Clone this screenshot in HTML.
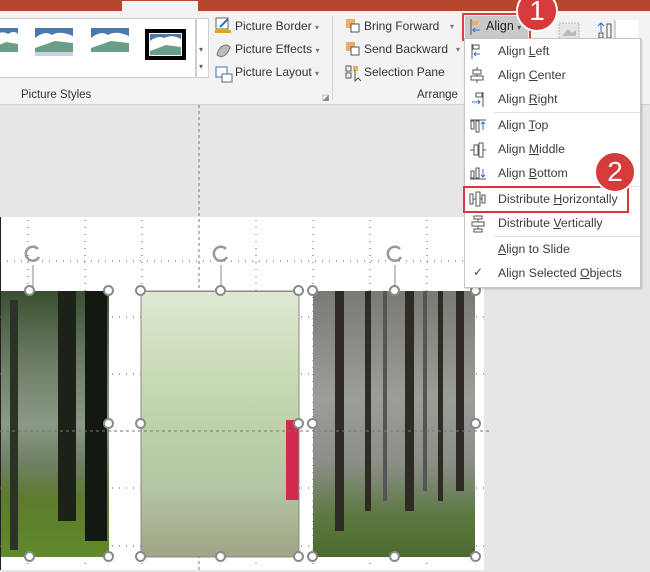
<!DOCTYPE html>
<html><head><style>
*{margin:0;padding:0;box-sizing:border-box}
body{width:650px;height:572px;overflow:hidden;position:relative;background:#e6e6e6;font-family:"Segoe UI","Liberation Sans",sans-serif;font-size:12px;color:#262626}
.abs{position:absolute}
.t{position:absolute;white-space:nowrap;font-size:12px;color:#333}
.mi{position:absolute;left:498px;font-size:12.3px;color:#3a3a3a;white-space:nowrap}
.h{position:absolute;width:11px;height:11px;border:2px solid #8a8a8a;border-radius:50%;background:#fff}
</style></head><body>
<div class="abs" style="left:0;top:0;width:650px;height:11px;background:#b7472a"></div>
<div class="abs" style="left:122px;top:1px;width:76px;height:10px;background:#f3f3f3"></div>
<div class="abs" style="left:0;top:11px;width:650px;height:94px;background:#f3f3f3;border-bottom:1px solid #d4d4d4"></div>
<div class="abs" style="left:0;top:18px;width:196px;height:60px;background:#fff;border:1px solid #cfcfcf;border-left:none"></div>
<div class="abs" style="left:196px;top:18px;width:13px;height:60px;background:#fff;border:1px solid #cfcfcf"></div>
<div class="abs" style="left:199px;top:45px;font-size:8px;color:#666">▾</div>
<div class="abs" style="left:199px;top:62px;font-size:8px;color:#666">▾</div>
<svg class="abs" style="left:0;top:28px" width="190" height="38">
<g><rect x="-8" y="0" width="26" height="24" fill="#4a78b0"/><path d="M-8 8 Q2 2 8 6 Q14 2 18 6 V24 H-8Z" fill="#fff"/><path d="M-8 20 L6 14 L18 16 V24 H-8Z" fill="#6b9e86"/></g>
<g><rect x="35" y="0" width="38" height="24" fill="#4a78b0"/><path d="M35 10 Q45 2 52 7 Q60 2 73 8 V24 H35Z" fill="#fff"/><path d="M35 20 L55 13 L73 15 V24 H35Z" fill="#6b9e86"/><rect x="35" y="24" width="38" height="4" fill="#c8d4e4"/></g>
<g><rect x="91" y="0" width="38" height="24" fill="#4a78b0"/><path d="M91 10 Q101 2 108 7 Q116 2 129 8 V24 H91Z" fill="#fff"/><path d="M91 20 L111 13 L129 15 V24 H91Z" fill="#6b9e86"/></g>
<rect x="145" y="1" width="41" height="31" fill="#000"/><rect x="149" y="5" width="33" height="23" fill="#fff"/>
<g><rect x="150" y="6" width="31" height="21" fill="#4a78b0"/><path d="M150 13 Q158 7 164 10 Q172 6 181 11 V27 H150Z" fill="#fff"/><path d="M150 23 L166 17 L181 19 V27 H150Z" fill="#6b9e86"/></g>
</svg>
<div class="t" style="left:21px;top:89px;font-size:11.5px">Picture Styles</div>
<div class="abs" style="left:322px;top:93px;font-size:8px;color:#888">◪</div>
<svg class="abs" style="left:215px;top:17px" width="18" height="68">
<rect x="1" y="1" width="12" height="11" fill="#fff" stroke="#666"/><path d="M5 10 L13 2" stroke="#3a6fc2" stroke-width="2"/><rect x="0" y="13" width="16" height="3" fill="#e0a020"/>
<path d="M2 38 Q4 28 12 28 L15 30 Q13 38 6 40Z" fill="#bbb" stroke="#777"/>
<rect x="1" y="50" width="11" height="10" fill="#fff" stroke="#3a6fc2"/><rect x="7" y="57" width="10" height="8" fill="#fff" stroke="#666"/>
</svg>
<div class="t" style="left:235px;top:19px">Picture Border <span style="font-size:8px;color:#777">▾</span></div>
<div class="t" style="left:235px;top:42px">Picture Effects <span style="font-size:8px;color:#777">▾</span></div>
<div class="t" style="left:235px;top:65px">Picture Layout <span style="font-size:8px;color:#777">▾</span></div>
<div class="abs" style="left:332px;top:16px;width:1px;height:84px;background:#d4d4d4"></div>
<svg class="abs" style="left:345px;top:17px" width="18" height="68">
<rect x="1" y="2" width="9" height="9" fill="#e8b060"/><rect x="6" y="7" width="8" height="8" fill="#fff" stroke="#555"/>
<rect x="1" y="25" width="9" height="9" fill="#e8b060"/><rect x="6" y="30" width="8" height="8" fill="#fff" stroke="#555"/>
<rect x="1" y="49" width="5" height="5" fill="none" stroke="#555"/><rect x="1" y="56" width="5" height="5" fill="none" stroke="#555"/><rect x="8" y="49" width="5" height="5" fill="#e8b060"/><path d="M10 53 L10 64 L13 61 L16 64" fill="none" stroke="#555"/>
</svg>
<div class="t" style="left:364px;top:19px">Bring Forward</div><div class="abs" style="left:450px;top:22px;font-size:8px;color:#777">▾</div>
<div class="t" style="left:364px;top:42px">Send Backward</div><div class="abs" style="left:456px;top:45px;font-size:8px;color:#777">▾</div>
<div class="t" style="left:364px;top:65px">Selection Pane</div>
<div class="t" style="left:417px;top:89px;font-size:11.5px">Arrange</div>
<div class="abs" style="left:462px;top:13px;width:69px;height:28px;border:2px solid #e03c3c;background:#f3f3f3"></div>
<div class="abs" style="left:465px;top:16px;width:63px;height:22px;background:#c9c9c9"></div>
<svg class="abs" style="left:470px;top:19px" width="14" height="16"><path d="M1 0V16" stroke="#555"/><rect x="2" y="2" width="6" height="4" fill="#e8b060"/><path d="M10 11H3M5 9L3 11L5 13" stroke="#3a6fc2" fill="none"/></svg>
<div class="t" style="left:486px;top:19px;color:#222;font-size:12.5px">Align <span style="font-size:8px;color:#555">▾</span></div>
<svg class="abs" style="left:558px;top:20px" width="80" height="24"><rect x="1" y="3" width="20" height="16" fill="#e5e5e5" stroke="#bbb" stroke-dasharray="2 1"/><path d="M4 16 L10 9 L14 13 L18 10 V16Z" fill="#bbb"/><path d="M43 3V12M40 6L43 3L46 6" stroke="#3a6fc2" fill="none"/><rect x="41" y="13" width="4" height="5" fill="none" stroke="#555"/><rect x="49" y="4" width="4" height="14" fill="none" stroke="#555"/><rect x="57" y="-2" width="30" height="22" fill="#fff" stroke="#aaa"/></svg>
<div class="abs" style="left:0;top:217px;width:484px;height:353px;background:#fff;border-left:1px solid #222"></div>
<svg class="abs" style="left:0;top:105px" width="650" height="467">
<g stroke="#555" stroke-width="1" stroke-dasharray="1 6">
<path d="M28 115V460M85 115V460M142 115V460M256 115V460M313 115V460M370 115V460M427 115V460"/>
<path d="M0 156H484M0 212H484M0 269H484M0 383H484M0 441H484"/>
</g>
<path d="M199 0V467" stroke="#777" stroke-dasharray="3 3"/>
</svg>
<div class="abs" style="left:1px;top:291px;width:108px;height:266px;background:linear-gradient(180deg,#39502f 0%,#6a7a62 25%,#8a9a86 50%,#6f7f62 65%,#5e7a2e 78%,#5f8a2a 100%)"></div>
<div class="abs" style="left:58px;top:291px;width:18px;height:230px;background:#1c2218"></div>
<div class="abs" style="left:85px;top:291px;width:22px;height:250px;background:#141813"></div>
<div class="abs" style="left:10px;top:300px;width:8px;height:250px;background:#2a3325"></div>
<div class="abs" style="left:141px;top:291px;width:158px;height:266px;background:linear-gradient(180deg,#dfe9d2 0%,#c6d9b2 35%,#b8cca5 60%,#b3c4a2 75%,#9fa585 100%);border-top:1px solid #888"></div>
<div class="abs" style="left:286px;top:420px;width:13px;height:80px;background:#d02a50"></div>
<div class="abs" style="left:313px;top:291px;width:162px;height:266px;background:linear-gradient(180deg,#7a7a74 0%,#9c9e98 40%,#8a8e86 65%,#5b7840 85%,#4c6a30 100%)"></div>
<svg class="abs" style="left:313px;top:291px" width="162" height="266"><g fill="#2e2a24"><rect x="22" y="0" width="9" height="240"/><rect x="52" y="0" width="6" height="220"/><rect x="92" y="0" width="9" height="220"/><rect x="125" y="0" width="5" height="210"/><rect x="143" y="0" width="8" height="200"/><rect x="110" y="0" width="4" height="200" fill="#555"/><rect x="70" y="0" width="4" height="210" fill="#555"/></g></svg>
<svg class="abs" style="left:0;top:230px" width="490" height="340">
<path d="M0 201H650" stroke="#777" stroke-dasharray="3 3"/>
<g stroke="#888" stroke-width="1" fill="none"><path d="M33 35V61M221 35V61M395 35V61"/><rect x="141" y="61" width="158" height="266"/></g>
<g fill="none" stroke="#999" stroke-width="2.5"><path d="M39 27 A7 7 0 1 1 38 19"/><path d="M227 27 A7 7 0 1 1 226 19"/><path d="M401 27 A7 7 0 1 1 400 19"/></g>
</svg>
<div class="h" style="left:24px;top:285px"></div><div class="h" style="left:103px;top:285px"></div>
<div class="h" style="left:135px;top:285px"></div><div class="h" style="left:215px;top:285px"></div><div class="h" style="left:293px;top:285px"></div>
<div class="h" style="left:307px;top:285px"></div><div class="h" style="left:389px;top:285px"></div><div class="h" style="left:470px;top:285px"></div>
<div class="h" style="left:103px;top:418px"></div><div class="h" style="left:135px;top:418px"></div><div class="h" style="left:293px;top:418px"></div><div class="h" style="left:307px;top:418px"></div><div class="h" style="left:470px;top:418px"></div>
<div class="h" style="left:24px;top:551px"></div><div class="h" style="left:103px;top:551px"></div>
<div class="h" style="left:135px;top:551px"></div><div class="h" style="left:215px;top:551px"></div><div class="h" style="left:293px;top:551px"></div>
<div class="h" style="left:307px;top:551px"></div><div class="h" style="left:389px;top:551px"></div><div class="h" style="left:470px;top:551px"></div>
<div class="abs" style="left:464px;top:38px;width:177px;height:250px;background:#fff;border:1px solid #c6c6c6;box-shadow:1px 1px 2px rgba(0,0,0,.2)"></div>
<div class="abs" style="left:494px;top:112px;width:146px;height:1px;background:#e1e1e1"></div>
<div class="abs" style="left:494px;top:186px;width:146px;height:1px;background:#e1e1e1"></div>
<div class="abs" style="left:494px;top:236px;width:146px;height:1px;background:#e1e1e1"></div>
<svg class="abs" style="left:468px;top:42px" width="22" height="200" stroke="#555" fill="none">
<path d="M4 2V17"/><rect x="5" y="3" width="6" height="4"/><path d="M12 12H6M8 10L6 12L8 14" stroke="#3a6fc2"/>
<path d="M9 25V41"/><rect x="5" y="28" width="8" height="4" fill="#fff"/><rect x="3" y="34" width="12" height="4" fill="#fff"/>
<path d="M15 50V65"/><rect x="8" y="51" width="6" height="4"/><path d="M4 60H12M10 58L12 60L10 62" stroke="#3a6fc2"/>
<path d="M2 78H18"/><rect x="3" y="79" width="3" height="8"/><rect x="8" y="79" width="3" height="11"/><path d="M15 88V80M13 82L15 80L17 82" stroke="#3a6fc2"/>
<path d="M2 108H18"/><rect x="6" y="103" width="4" height="10" fill="#fff"/><rect x="11" y="101" width="4" height="14" fill="#fff"/>
<path d="M2 137H18"/><rect x="3" y="129" width="3" height="7"/><rect x="8" y="126" width="3" height="10"/><path d="M15 127V135M13 133L15 135L17 133" stroke="#3a6fc2"/>
<rect x="2" y="152" width="3" height="10"/><rect x="8" y="150" width="4" height="14"/><rect x="14" y="153" width="3" height="8"/><path d="M8 157H5M12 157H14"/>
<rect x="6" y="174" width="8" height="3"/><rect x="4" y="180" width="12" height="4"/><rect x="6" y="187" width="8" height="3"/><path d="M10 177V180M10 184V187"/>
</svg>
<div class="mi" style="top:44px">Align <u>L</u>eft</div>
<div class="mi" style="top:68px">Align <u>C</u>enter</div>
<div class="mi" style="top:92px">Align <u>R</u>ight</div>
<div class="mi" style="top:118px">Align <u>T</u>op</div>
<div class="mi" style="top:142px">Align <u>M</u>iddle</div>
<div class="mi" style="top:166px">Align <u>B</u>ottom</div>
<div class="abs" style="left:463px;top:186px;width:166px;height:27px;border:2px solid #d9363e"></div>
<div class="mi" style="top:192px">Distribute <u>H</u>orizontally</div>
<div class="mi" style="top:216px">Distribute <u>V</u>ertically</div>
<div class="mi" style="top:242px"><u>A</u>lign to Slide</div>
<div class="mi" style="top:266px">Align Selected <u>O</u>bjects</div>
<div class="abs" style="left:473px;top:265px;font-size:12px;color:#444">✓</div>
<div class="abs" style="left:516px;top:-10px;width:42px;height:42px;border-radius:50%;background:#d63b3b;border:2px solid #fff;color:#fff;font-size:28px;text-align:center;line-height:37px;font-family:'Liberation Sans',sans-serif">1</div>
<div class="abs" style="left:594px;top:151px;width:42px;height:42px;border-radius:50%;background:#d63b3b;border:2px solid #fff;color:#fff;font-size:28px;text-align:center;line-height:37px;font-family:'Liberation Sans',sans-serif">2</div>
</body></html>
